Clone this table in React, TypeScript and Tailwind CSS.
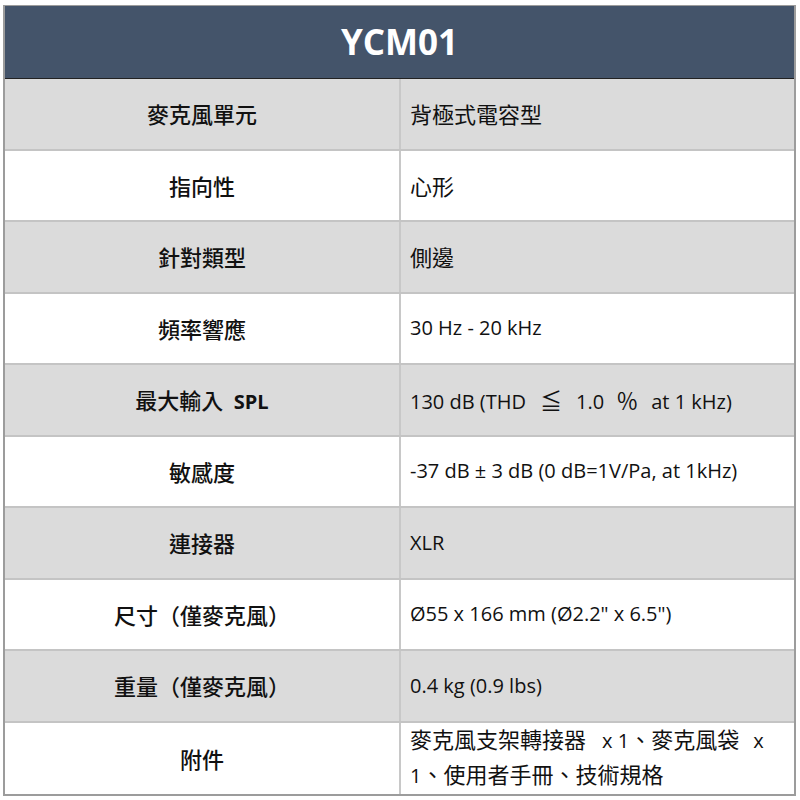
const cjk = "font-['Noto_Sans_CJK_TC',sans-serif]";
const latin = "font-['Open_Sans','Noto_Sans_CJK_TC',sans-serif]";

type Seg = { t: string; l?: boolean; gap?: string };

const rows: { label: Seg[]; value: Seg[] }[] = [
  { label: [{ t: "麥克風單元" }], value: [{ t: "背極式電容型" }] },
  { label: [{ t: "指向性" }], value: [{ t: "心形" }] },
  { label: [{ t: "針對類型" }], value: [{ t: "側邊" }] },
  { label: [{ t: "頻率響應" }], value: [{ t: "30 Hz - 20 kHz", l: true }] },
  {
    label: [{ t: "最大輸入" }, { t: "\u00a0\u00a0SPL", l: true }],
    value: [
      { t: "130 dB (THD", l: true },
      { t: "≦", gap: "ml-[14px]" },
      { t: "1.0", l: true, gap: "ml-[14px]" },
      { t: "％", gap: "ml-[12px]" },
      { t: "at 1 kHz)", l: true, gap: "ml-[13px]" },
    ],
  },
  { label: [{ t: "敏感度" }], value: [{ t: "-37 dB ± 3 dB (0 dB=1V/Pa, at 1kHz)", l: true }] },
  { label: [{ t: "連接器" }], value: [{ t: "XLR", l: true }] },
  { label: [{ t: "尺寸（僅麥克風）" }], value: [{ t: "Ø55 x 166 mm (Ø2.2\" x 6.5\")", l: true }] },
  { label: [{ t: "重量（僅麥克風）" }], value: [{ t: "0.4 kg (0.9 lbs)", l: true }] },
];

function Text({ segs, bold }: { segs: Seg[]; bold?: boolean }) {
  return (
    <>
      {segs.map((s, i) =>
        s.l ? (
          <span key={i} className={`${latin} text-[20px] ${bold ? "font-bold" : ""} ${s.gap ?? ""}`}>
            {s.t}
          </span>
        ) : (
          <span key={i} className={`${cjk} text-[22px] ${bold ? "font-medium" : ""} ${s.gap ?? ""}`}>
            {s.t}
          </span>
        ),
      )}
    </>
  );
}

export default function App() {
  return (
    <div className="h-[800px] w-[800px] bg-white pl-[3px] pt-[5px]">
      <div className="w-[793px] border-2 border-t border-[#9c9c9c] text-[#111]">
        <div className="flex h-[73px] items-center justify-center border-b border-[#222] bg-[#44546a]">
          <span className={`${latin} text-[35px] font-bold text-white`}>YCM01</span>
        </div>
        {rows.map((r, i) => (
          <div
            key={i}
            className={`flex h-[71.5px] border-b-2 border-[#c4c4c4] ${i % 2 === 0 ? "bg-[#dbdbdb]" : "bg-white"}`}
          >
            <div className="flex w-[396px] items-center justify-center border-r-2 border-[#c8c8c8]">
              <span className="leading-none">
                <Text segs={r.label} bold />
              </span>
            </div>
            <div className="flex flex-1 items-center pl-[9px]">
              <span className="leading-none">
                <Text segs={r.value} />
              </span>
            </div>
          </div>
        ))}
        <div className="flex h-[71px] bg-white">
          <div className="flex w-[396px] items-center justify-center border-r-2 border-[#c8c8c8]">
            <span className={`${cjk} text-[22px] font-medium leading-none`}>附件</span>
          </div>
          <div className="flex flex-1 items-center pl-[9px] pr-2">
            <p className="leading-[31px]">
              <span className={`${cjk} text-[22px]`}>麥克風支架轉接器</span>
              <span className={`${latin} ml-[16px] text-[20px]`}>x 1</span>
              <span className={`${cjk} text-[22px]`}>、麥克風袋</span>
              <span className={`${latin} ml-[14px] text-[20px]`}>x</span>
              <br />
              <span className={`${latin} text-[20px]`}>1</span>
              <span className={`${cjk} text-[22px]`}>、使用者手冊、技術規格</span>
            </p>
          </div>
        </div>
      </div>
    </div>
  );
}
